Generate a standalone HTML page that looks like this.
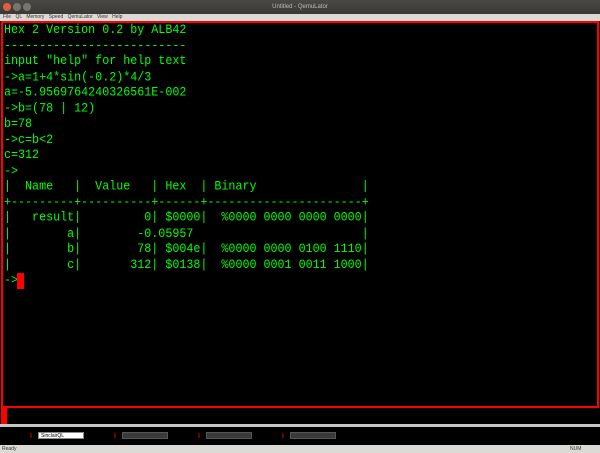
<!DOCTYPE html>
<html><head><meta charset="utf-8"><style>
*{margin:0;padding:0;box-sizing:border-box}
body{width:600px;height:453px;overflow:hidden;background:#000;position:relative;font-family:"Liberation Sans",sans-serif}
#title{position:absolute;left:0;top:0;width:600px;height:14px;background:linear-gradient(#4a4946,#3a3936);color:#bbb;font-size:6px;text-align:center;line-height:14px}
.btn{position:absolute;top:3px;width:8px;height:8px;border-radius:50%;background:#77756f}
#menu{position:absolute;left:0;top:14px;width:600px;height:7px;background:#dcdad5;font-size:5px;line-height:7px;color:#333;padding-left:3px;word-spacing:3px}
#scr{position:absolute;left:1px;top:21px;width:598px;height:387px;border:2px solid #f00;background:#000}
pre{position:absolute;left:4px;top:22px;font-family:"Liberation Mono",monospace;font-size:11.7px;line-height:14.5px;color:#0f0;transform:scaleY(1.08);transform-origin:0 0}
#cur{position:absolute;left:17px;top:273px;width:7px;height:16px;background:#f00}
#low{position:absolute;left:0;top:408px;width:600px;height:17px;background:#000;border-bottom:1px solid #f00}
#lowbar{position:absolute;left:1px;top:408px;width:6px;height:17px;background:#f00}
#sep{position:absolute;left:0;top:424px;width:600px;height:3px;background:#c8c6c2}
#tabs{position:absolute;left:0;top:427px;width:600px;height:18px;background:#000}
.t{position:absolute;top:5px;width:46px;height:7px;background:#3a3a3a;border:1px solid #555}
.r{position:absolute;top:6px;width:2px;height:5px;background:#600}
#status{position:absolute;left:0;top:445px;width:600px;height:8px;background:#dcdad5;font-size:5px;line-height:8px;color:#333;padding-left:2px}
</style></head><body>
<div id="title">Untitled - QemuLator</div>
<div class="btn" style="left:3px;background:#e0603a"></div>
<div class="btn" style="left:13px"></div>
<div class="btn" style="left:23px"></div>
<div id="menu">File QL Memory Speed QemuLator View Help</div>
<div id="scr"></div>
<pre>Hex 2 Version 0.2 by ALB42
--------------------------
input "help" for help text
-&gt;a=1+4*sin(-0.2)*4/3
a=-5.9569764240326561E-002
-&gt;b=(78 | 12)
b=78
-&gt;c=b&lt;2
c=312
-&gt;
|  Name   |  Value   | Hex  | Binary               |
+---------+----------+------+----------------------+
|   result|         0| $0000|  %0000 0000 0000 0000|
|        a|        -0.05957                        |
|        b|        78| $004e|  %0000 0000 0100 1110|
|        c|       312| $0138|  %0000 0001 0011 1000|
-&gt;</pre>
<div id="cur"></div>
<div id="low"></div><div id="lowbar"></div>
<div id="sep"></div>
<div id="tabs">
<div class="r" style="left:30px"></div><div class="t" style="left:38px;background:#fff;border-color:#888;width:46px;font-size:5px;line-height:6px;color:#000;padding-left:2px">SinclairQL</div>
<div class="r" style="left:114px"></div><div class="t" style="left:122px"></div>
<div class="r" style="left:198px"></div><div class="t" style="left:206px"></div>
<div class="r" style="left:282px"></div><div class="t" style="left:290px"></div>
</div>
<div id="status">Ready<span style="position:absolute;left:570px">NUM</span></div>
</body></html>
